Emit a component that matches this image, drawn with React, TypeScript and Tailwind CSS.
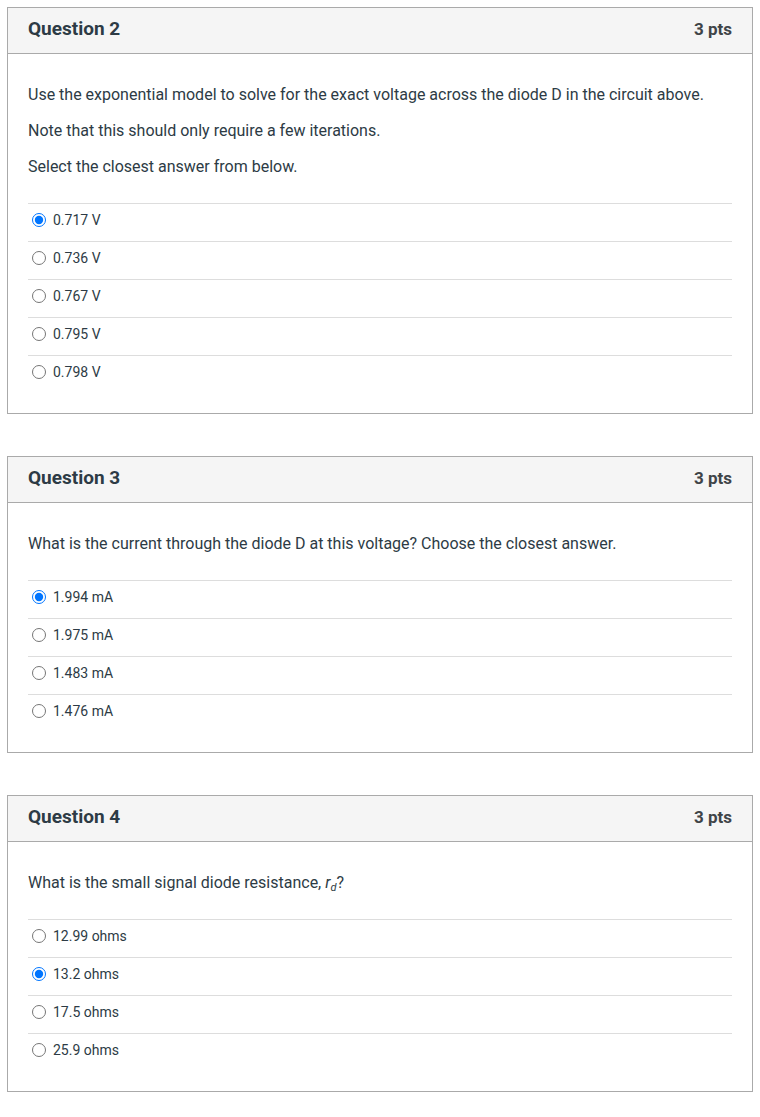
import React, { ReactNode } from "react";

type Question = {
  title: string;
  points: string;
  prompt: ReactNode[];
  answers: string[];
  selected: number;
};

const questions: Question[] = [
  {
    title: "Question 2",
    points: "3 pts",
    prompt: [
      "Use the exponential model to solve for the exact voltage across the diode D in the circuit above.",
      "Note that this should only require a few iterations.",
      "Select the closest answer from below.",
    ],
    answers: ["0.717 V", "0.736 V", "0.767 V", "0.795 V", "0.798 V"],
    selected: 0,
  },
  {
    title: "Question 3",
    points: "3 pts",
    prompt: [
      "What is the current through the diode D at this voltage? Choose the closest answer.",
    ],
    answers: ["1.994 mA", "1.975 mA", "1.483 mA", "1.476 mA"],
    selected: 0,
  },
  {
    title: "Question 4",
    points: "3 pts",
    prompt: [
      <>
        What is the small signal diode resistance,{" "}
        <i>
          r<sub className="text-[11px]">d</sub>
        </i>
        ?
      </>,
    ],
    answers: ["12.99 ohms", "13.2 ohms", "17.5 ohms", "25.9 ohms"],
    selected: 1,
  },
];

const QuestionCard = ({ q }: { q: Question }) => {
  return (
    <div className="border border-[#aaaaaa] bg-white">
      <div className="h-[46px] flex items-center justify-between px-5 pb-[2px] bg-[#f5f5f5] border-b border-[#aaaaaa]">
        <h2 className="text-[19px] font-bold text-[#2d3b45]">{q.title}</h2>
        <div className="text-[17px] font-bold text-[#3f4448]">{q.points}</div>
      </div>
      <div className="px-5 pt-[29px] pb-5">
        <div className="flex flex-col gap-3">
          {q.prompt.map((p, i) => (
            <p key={i} className="text-[16px] leading-6 text-[#2d3b45]">
              {p}
            </p>
          ))}
        </div>
        <div className="mt-[24px]">
          {q.answers.map((a, i) => (
            <label
              key={i}
              className="h-[38px] flex items-center pb-[5px] border-t border-[#dddddd] text-[14px] text-[#2d3b45]"
            >
              <input
                type="radio"
                name={q.title}
                defaultChecked={i === q.selected}
                className="w-[14px] h-[14px] ml-[4px] mr-[7px]"
              />
              <span>{a}</span>
            </label>
          ))}
        </div>
      </div>
    </div>
  );
};

export default function App() {
  return (
    <div
      className="bg-white min-h-[1117px] pt-[7px] pl-[7px] pr-[7px] flex flex-col gap-[42px]"
      style={{ fontFamily: "Roboto, 'Liberation Sans', sans-serif" }}
    >
      {questions.map((q) => (
        <QuestionCard key={q.title} q={q} />
      ))}
    </div>
  );
}
